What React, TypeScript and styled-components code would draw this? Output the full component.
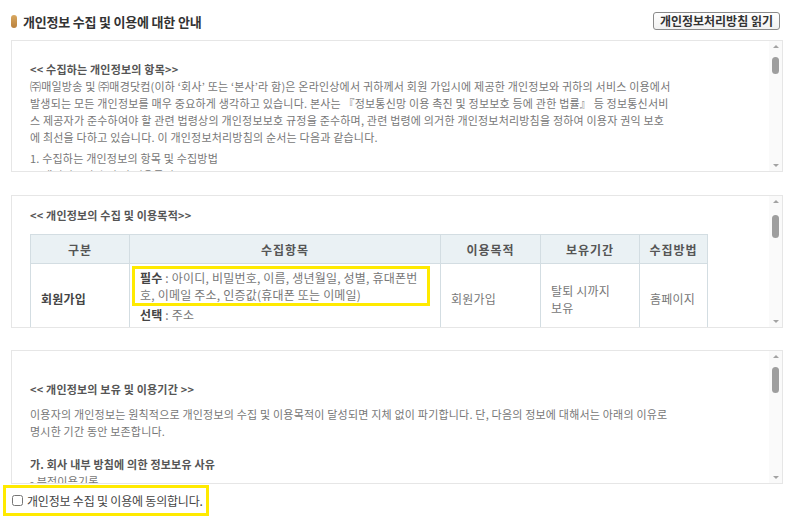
import React from 'react';
import styled, { createGlobalStyle } from 'styled-components';

const GlobalStyle = createGlobalStyle`
    html, body { margin: 0; padding: 0; background: #fff; }
    body { font-family: "Noto Sans CJK KR", "Noto Sans", sans-serif; color: #666; }
`;

const Page = styled.div`
    width: 800px;
    height: 520px;
    padding: 10px 17px 0 11px;
    box-sizing: border-box;
    display: flex;
    flex-direction: column;
`;

const Header = styled.div`
    display: flex;
    align-items: center;
    justify-content: space-between;
    height: 22px;
    margin-bottom: 8px;
    padding-right: 3px;
`;

const Title = styled.h2`
    display: flex;
    align-items: center;
    gap: 6px;
    margin: 0;
    font-size: 13px;
    font-weight: bold;
    color: #333;
    letter-spacing: -0.2px;
`;

const TitleMark = styled.span`
    width: 6px;
    height: 13px;
    border-radius: 3px;
    background: linear-gradient(#d9a860, #b9803c);
`;

const ReadButton = styled.button`
    height: 18px;
    padding: 0 6px;
    border: 1px solid #8a8a8a;
    border-radius: 3px;
    background: linear-gradient(#ffffff, #f1f1f1);
    font-family: inherit;
    font-size: 12px;
    font-weight: bold;
    color: #333;
    line-height: 16px;
    cursor: pointer;
`;

const Box = styled.div<{ gap: number; height: number }>`
    display: flex;
    height: ${p => p.height}px;
    margin-bottom: ${p => p.gap}px;
    border: 1px solid #e6e6e6;
    box-sizing: border-box;
`;

const Content = styled.div<{ top: number }>`
    flex: 1;
    overflow: hidden;
    padding: ${p => p.top}px 40px 0 18px;
    font-size: 11px;
    line-height: 17px;
    color: #777;
    letter-spacing: 0.2px;
`;

const ScrollTrack = styled.div`
    width: 13px;
    background: #fafafa;
    display: flex;
    flex-direction: column;
    align-items: center;
    justify-content: space-between;
    padding: 4px 0;
    box-sizing: border-box;
    position: relative;
`;

const Arrow = styled.span<{ down?: boolean }>`
    width: 0;
    height: 0;
    border-left: 3px solid transparent;
    border-right: 3px solid transparent;
    ${p => (p.down ? 'border-top: 3px solid #a3a3a3;' : 'border-bottom: 3px solid #a3a3a3;')}
`;

const Thumb = styled.span`
    position: absolute;
    left: 3px;
    width: 7px;
    border-radius: 4px;
    background: #9e9e9e;
`;

const Scrollbar = ({ top, size }: { top: number; size: number }) => (
    <ScrollTrack>
        <Arrow />
        <Thumb style={{ top, height: size }} />
        <Arrow down />
    </ScrollTrack>
);

const Heading = styled.div<{ gap?: number }>`
    font-weight: bold;
    color: #555;
    margin-bottom: ${p => p.gap ?? 0}px;
`;

const Para = styled.p<{ gap?: number }>`
    margin: 0 0 ${p => p.gap ?? 0}px;
    white-space: nowrap;
`;

const Table = styled.table`
    border-collapse: collapse;
    margin-top: 10px;
    font-size: 12px;
    line-height: 17px;
`;

const Th = styled.th<{ w: number }>`
    width: ${p => p.w}px;
    height: 28px;
    background: #eaf1f4;
    border: 1px solid #d3dde2;
    color: #555;
    font-weight: bold;
    text-align: center;
    padding: 0;
    letter-spacing: 1px;
`;

const Td = styled.td<{ strong?: boolean; lifted?: boolean }>`
    border: 1px solid #d3dde2;
    padding: ${p => (p.lifted ? '2px 12px 10px 10px' : '6px 12px 6px 10px')};
    vertical-align: middle;
    color: ${p => (p.strong ? '#444' : '#777')};
    font-weight: ${p => (p.strong ? 'bold' : 'normal')};
`;

const Highlight = styled.div`
    border: 3px solid #ffea00;
    margin: 0 -2px 0 -8px;
    padding: 0 5px;
`;

const Label = styled.b`
    color: #444;
`;

const AgreeRow = styled.label`
    align-self: flex-start;
    display: flex;
    align-items: center;
    gap: 4px;
    margin: 0 0 0 -8px;
    padding: 4px 3px 4px 6px;
    border: 3px solid #ffea00;
    font-size: 12px;
    color: #444;
    letter-spacing: -0.2px;
`;

const Check = styled.input`
    width: 11px;
    height: 11px;
    margin: 0;
`;

const columns = [
    { name: '구분', width: 98 },
    { name: '수집항목', width: 310 },
    { name: '이용목적', width: 99 },
    { name: '보유기간', width: 98 },
    { name: '수집방법', width: 67 },
];

export default function App() {
    return (
        <>
            <GlobalStyle />
            <Page>
                <Header>
                    <Title><TitleMark />개인정보 수집 및 이용에 대한 안내</Title>
                    <ReadButton>개인정보처리방침 읽기</ReadButton>
                </Header>

                <Box gap={23} height={132}>
                    <Content top={20}>
                        <Heading>&lt;&lt; 수집하는 개인정보의 항목&gt;&gt;</Heading>
                        <Para>㈜매일방송 및 ㈜매경닷컴(이하 ‘회사’ 또는 ‘본사’라 함)은 온라인상에서 귀하께서 회원 가입시에 제공한 개인정보와 귀하의 서비스 이용에서</Para>
                        <Para>발생되는 모든 개인정보를 매우 중요하게 생각하고 있습니다. 본사는 『정보통신망 이용 촉진 및 정보보호 등에 관한 법률』 등 정보통신서비</Para>
                        <Para>스 제공자가 준수하여야 할 관련 법령상의 개인정보보호 규정을 준수하며, 관련 법령에 의거한 개인정보처리방침을 정하여 이용자 권익 보호</Para>
                        <Para gap={4}>에 최선을 다하고 있습니다. 이 개인정보처리방침의 순서는 다음과 같습니다.</Para>
                        <Para>1. 수집하는 개인정보의 항목 및 수집방법</Para>
                        <Para>2. 개인정보의 수집 및 이용목적</Para>
                        <Para>3. 개인정보의 보유 및 이용기간</Para>
                    </Content>
                    <Scrollbar top={16} size={17} />
                </Box>

                <Box gap={22} height={133}>
                    <Content top={11}>
                        <Heading>&lt;&lt; 개인정보의 수집 및 이용목적&gt;&gt;</Heading>
                        <Table>
                            <thead>
                                <tr>
                                    {columns.map(c => <Th key={c.name} w={c.width}>{c.name}</Th>)}
                                </tr>
                            </thead>
                            <tbody>
                                <tr>
                                    <Td strong>회원가입</Td>
                                    <Td lifted>
                                        <Highlight>
                                            <Label>필수</Label> : 아이디, 비밀번호, 이름, 생년월일, 성별, 휴대폰번호, 이메일 주소, 인증값(휴대폰 또는 이메일)
                                        </Highlight>
                                        <Label>선택</Label> : 주소
                                    </Td>
                                    <Td>회원가입</Td>
                                    <Td>탈퇴 시까지<br />보유</Td>
                                    <Td>홈페이지</Td>
                                </tr>
                            </tbody>
                        </Table>
                    </Content>
                    <Scrollbar top={19} size={23} />
                </Box>

                <Box gap={1} height={134}>
                    <Content top={30}>
                        <Heading gap={8}>&lt;&lt; 개인정보의 보유 및 이용기간 &gt;&gt;</Heading>
                        <Para>이용자의 개인정보는 원칙적으로 개인정보의 수집 및 이용목적이 달성되면 지체 없이 파기합니다. 단, 다음의 정보에 대해서는 아래의 이유로</Para>
                        <Para gap={16}>명시한 기간 동안 보존합니다.</Para>
                        <Heading>가. 회사 내부 방침에 의한 정보보유 사유</Heading>
                        <Para>- 부정이용기록</Para>
                        <Para>보존 이유 : 부정 이용 방지</Para>
                        <Para>보존 기간 : 1년</Para>
                    </Content>
                    <Scrollbar top={16} size={26} />
                </Box>

                <AgreeRow>
                    <Check type="checkbox" />
                    개인정보 수집 및 이용에 동의합니다.
                </AgreeRow>
            </Page>
        </>
    );
}
